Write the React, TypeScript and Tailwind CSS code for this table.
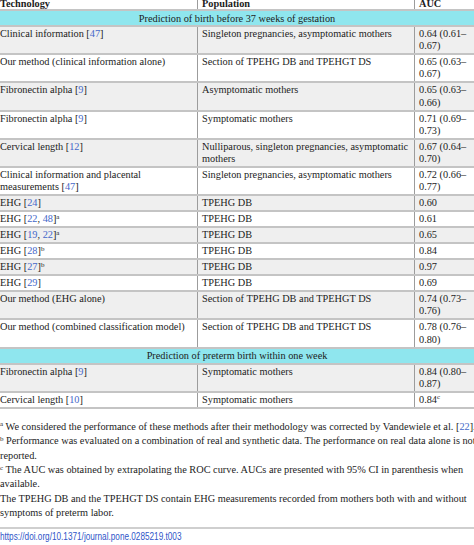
import React from "react";

type N = React.ReactNode;

const R = ({ children }: { children: N }) => (
  <span className="text-[#4467c9]">{children}</span>
);

const S = ({ children }: { children: N }) => (
  <sup className="text-[7px] text-[#222]">{children}</sup>
);

function Row({ a, b, c, gray }: { a: N; b: N; c: N; gray: boolean }) {
  return (
    <div
      className={
        gray
          ? "grid grid-cols-[198px_217px_1fr] border-b-2 border-[#c4c4c4] bg-[#efefef]"
          : "grid grid-cols-[198px_217px_1fr] border-b-2 border-[#c4c4c4] bg-white"
      }
    >
      <div className="border-r border-[#9c9c9c] pt-[1px] pb-[0.8px] pr-1 whitespace-nowrap">{a}</div>
      <div className="border-r border-[#9c9c9c] pt-[1px] pb-[0.8px] pl-[4px] whitespace-nowrap">{b}</div>
      <div className="pt-[1px] pb-[0.8px] pl-[4px] whitespace-nowrap">{c}</div>
    </div>
  );
}

function Band({ children }: { children: N }) {
  return (
    <div className="bg-[#8fe6ee] border-b-2 border-[#c4c4c4] text-center pt-[1.8px] whitespace-nowrap">
      {children}
    </div>
  );
}

const TP = "TPEHG DB";
const SEC = "Section of TPEHG DB and TPEHGT DS";

export default function App() {
  return (
    <div className="w-[474px] h-[545px] overflow-hidden bg-white text-[#1c1c1c] font-['Liberation_Serif',serif] text-[10.3px] leading-[12.2px]">
      {/* header */}
      <div className="grid grid-cols-[198px_217px_1fr] h-[11px] overflow-hidden border-b-2 border-[#c4c4c4] bg-white font-bold">
        <div className="border-r border-[#9c9c9c]">
          <div className="-mt-[2.2px]">Technology</div>
        </div>
        <div className="border-r border-[#9c9c9c] pl-[4px]">
          <div className="-mt-[2.2px]">Population</div>
        </div>
        <div className="pl-[4px]">
          <div className="-mt-[2.2px]">AUC</div>
        </div>
      </div>

      <Band>Prediction of birth before 37 weeks of gestation</Band>

      <Row gray a={<>Clinical information [<R>47</R>]</>} b="Singleton pregnancies, asymptomatic mothers" c={<>0.64 (0.61–<br />0.67)</>} />
      <Row gray={false} a="Our method (clinical information alone)" b={SEC} c={<>0.65 (0.63–<br />0.67)</>} />
      <Row gray a={<>Fibronectin alpha [<R>9</R>]</>} b="Asymptomatic mothers" c={<>0.65 (0.63–<br />0.66)</>} />
      <Row gray={false} a={<>Fibronectin alpha [<R>9</R>]</>} b="Symptomatic mothers" c={<>0.71 (0.69–<br />0.73)</>} />
      <Row gray a={<>Cervical length [<R>12</R>]</>} b={<>Nulliparous, singleton pregnancies, asymptomatic<br />mothers</>} c={<>0.67 (0.64–<br />0.70)</>} />
      <Row gray={false} a={<>Clinical information and placental<br />measurements [<R>47</R>]</>} b="Singleton pregnancies, asymptomatic mothers" c={<>0.72 (0.66–<br />0.77)</>} />
      <Row gray a={<>EHG [<R>24</R>]</>} b={TP} c="0.60" />
      <Row gray={false} a={<>EHG [<R>22</R>, <R>48</R>]<S>a</S></>} b={TP} c="0.61" />
      <Row gray a={<>EHG [<R>19</R>, <R>22</R>]<S>a</S></>} b={TP} c="0.65" />
      <Row gray={false} a={<>EHG [<R>28</R>]<S>b</S></>} b={TP} c="0.84" />
      <Row gray a={<>EHG [<R>27</R>]<S>b</S></>} b={TP} c="0.97" />
      <Row gray={false} a={<>EHG [<R>29</R>]</>} b={TP} c="0.69" />
      <Row gray a="Our method (EHG alone)" b={SEC} c={<>0.74 (0.73–<br />0.76)</>} />
      <Row gray={false} a="Our method (combined classification model)" b={SEC} c={<>0.78 (0.76–<br />0.80)</>} />

      <Band>Prediction of preterm birth within one week</Band>

      <Row gray a={<>Fibronectin alpha [<R>9</R>]</>} b="Symptomatic mothers" c={<>0.84 (0.80–<br />0.87)</>} />
      <Row gray={false} a={<>Cervical length [<R>10</R>]</>} b="Symptomatic mothers" c={<>0.84<S>c</S></>} />

      {/* footnotes */}
      <div className="mt-[11px] leading-[14.4px] whitespace-nowrap">
        <div><S>a</S> We considered the performance of these methods after their methodology was corrected by Vandewiele et al. [<R>22</R>].</div>
        <div><S>b</S> Performance was evaluated on a combination of real and synthetic data. The performance on real data alone is not</div>
        <div>reported.</div>
        <div><S>c</S> The AUC was obtained by extrapolating the ROC curve. AUCs are presented with 95% CI in parenthesis when</div>
        <div>available.</div>
        <div>The TPEHG DB and the TPEHGT DS contain EHG measurements recorded from mothers both with and without</div>
        <div>symptoms of preterm labor.</div>
      </div>

      <div className="mt-[6px] border-t-2 border-[#cfcfcf]" />
      <div className="mt-[2px] font-['Liberation_Sans',Arial,sans-serif] text-[10px] leading-[12px] text-[#2f55c8] whitespace-nowrap origin-left scale-x-[0.82]">
        https://doi.org/10.1371/journal.pone.0285219.t003
      </div>
    </div>
  );
}
